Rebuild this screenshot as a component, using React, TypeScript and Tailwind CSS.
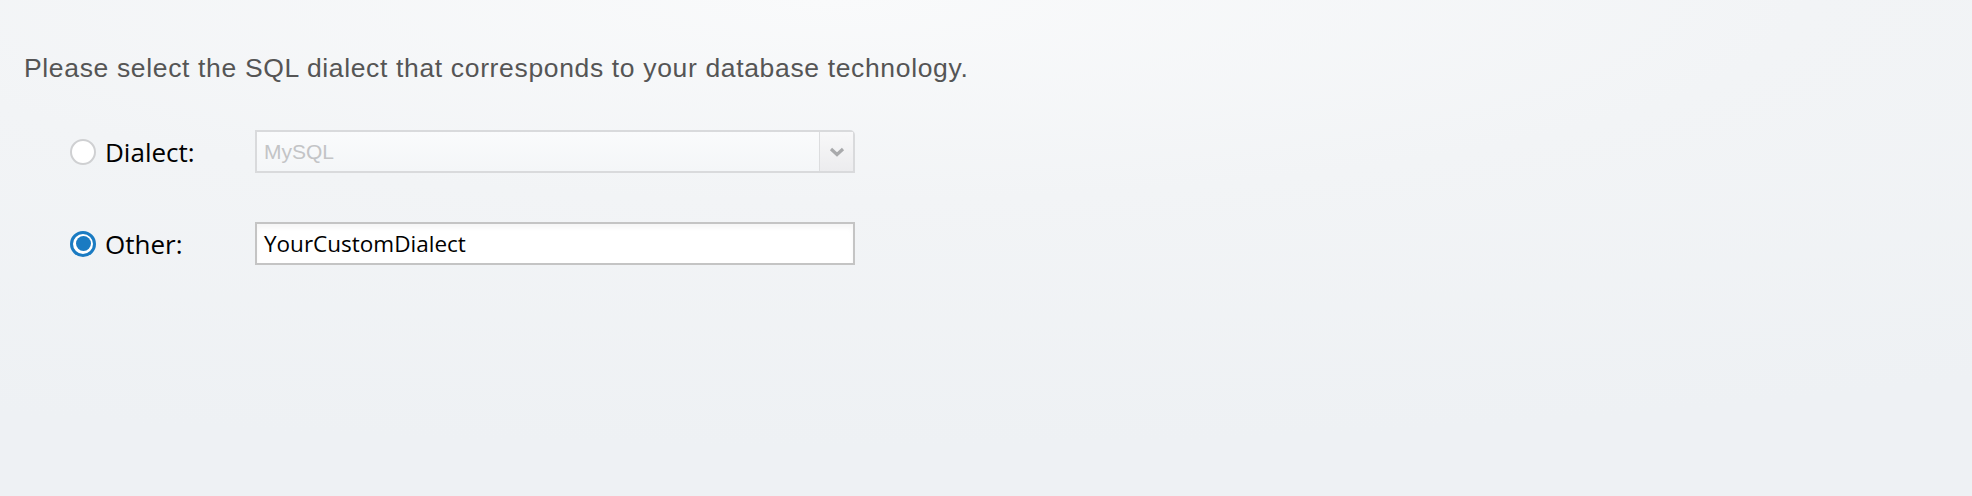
import React from "react";

export default function App() {
  return (
    <div className="w-full min-h-[496px] bg-[radial-gradient(ellipse_110%_90%_at_42%_0%,#f9fafb_0%,#f2f4f6_45%,#eef1f4_100%)] overflow-hidden">
      <p className="pl-6 pt-[52px] text-[26.5px] leading-[32px] tracking-[0.65px] text-[#555555] font-['Liberation_Sans',Arial,sans-serif]">
        Please select the SQL dialect that corresponds to your database technology.
      </p>
      <div className="mt-[46px] pl-[70px] flex flex-col gap-[49px] font-['Open_Sans','Noto_Sans',sans-serif]">
        <div className="flex items-center h-[43px]">
          <div className="w-[26px] h-[26px] rounded-full border-2 border-[#cfd0d2] bg-white shrink-0" />
          <span className="ml-[9px] w-[150px] text-[26px] leading-none text-black">Dialect:</span>
          <div className="w-[600px] h-[43px] flex border-2 border-[#d9dadc] rounded-tr-[5px] bg-gradient-to-b from-[#fafbfc] to-[#f4f6f8]">
            <span className="flex-1 pl-[7px] flex items-center text-[21px] text-[#c3c4c6] font-['Liberation_Sans',Arial,sans-serif]">
              MySQL
            </span>
            <div className="w-[34px] h-full border-l border-[#dcdddf] bg-gradient-to-b from-[#f8f8f9] to-[#ececee] flex items-center justify-center">
              <svg width="16" height="10" viewBox="0 0 16 10">
                <polyline points="2,2 8,7.5 14,2" fill="none" stroke="#a9aaac" strokeWidth="3.2" />
              </svg>
            </div>
          </div>
        </div>
        <div className="flex items-center h-[43px]">
          <div className="w-[26px] h-[26px] rounded-full border-[3px] border-[#1a7bc2] bg-white shrink-0 flex items-center justify-center">
            <div className="w-[15px] h-[15px] rounded-full bg-[#1a7bc2]" />
          </div>
          <span className="ml-[9px] w-[150px] text-[26px] leading-none text-black">Other:</span>
          <div className="w-[600px] h-[43px] border-2 border-[#c4c4c4] bg-white shadow-[inset_0_4px_5px_rgba(0,0,0,0.04)] flex items-center pl-[7px] text-[22.5px] text-black">
            YourCustomDialect
          </div>
        </div>
      </div>
    </div>
  );
}
